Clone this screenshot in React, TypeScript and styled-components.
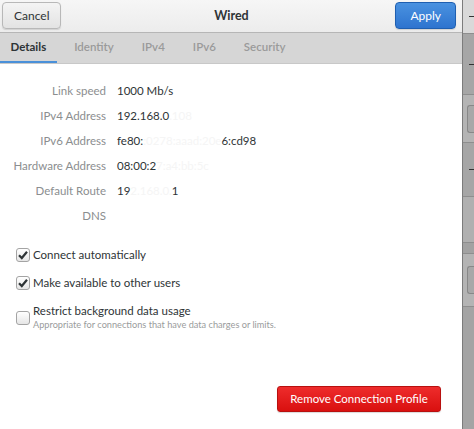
import styled, { createGlobalStyle } from "styled-components";

const GlobalStyle = createGlobalStyle`
  html, body {
    margin: 0;
    padding: 0;
    background: #ffffff;
  }
  body {
    font-family: Lato, "Noto Sans", "Liberation Sans", sans-serif;
    color: #2e3436;
  }
`;

const details = [
  { label: "Link speed", value: "1000 Mb/s", hidden: "", tail: "" },
  { label: "IPv4 Address", value: "192.168.0", hidden: ".108", tail: "" },
  { label: "IPv6 Address", value: "fe80:", hidden: ":0278:aaad:20e", tail: "6:cd98" },
  { label: "Hardware Address", value: "08:00:2", hidden: "7:a4:bb:5c", tail: "" },
  { label: "Default Route", value: "19", hidden: "2.168.0.", tail: "1" },
  { label: "DNS", value: "", hidden: "", tail: "" },
];

const tabs = ["Details", "Identity", "IPv4", "IPv6", "Security"];

function Check({ checked }: { checked: boolean }) {
  return (
    <Box>
      {checked && (
        <svg width="12" height="12" viewBox="0 0 12 12">
          <path d="M2 6.2 L4.8 9 L10 2.8" fill="none" stroke="#2e3436" strokeWidth="2.2" />
        </svg>
      )}
    </Box>
  );
}

function App() {
  return (
    <Page>
      <GlobalStyle />
      <Dialog>
        <Header>
          <Button>Cancel</Button>
          <Title>Wired</Title>
          <Button $primary>Apply</Button>
        </Header>
        <TabBar>
          {tabs.map((t, i) => (
            <Tab key={t} $active={i === 0}>
              {t}
            </Tab>
          ))}
        </TabBar>
        <Body>
          <InfoGrid>
            {details.map((d) => (
              <Row key={d.label}>
                <Label>{d.label}</Label>
                <Value>
                  {d.value}
                  {d.hidden && <Erased>{d.hidden}</Erased>}
                  {d.tail}
                </Value>
              </Row>
            ))}
          </InfoGrid>
          <Options>
            <Option>
              <Check checked />
              <OptionText>Connect automatically</OptionText>
            </Option>
            <Option>
              <Check checked />
              <OptionText>Make available to other users</OptionText>
            </Option>
            <Option $top>
              <Check checked={false} />
              <OptionText>
                Restrict background data usage
                <Hint>Appropriate for connections that have data charges or limits.</Hint>
              </OptionText>
            </Option>
          </Options>
          <Footer>
            <Danger>Remove Connection Profile</Danger>
          </Footer>
        </Body>
      </Dialog>
      <Behind>
        <Segment $h={33} $tone="#d9d9d9">
          <Dash />
        </Segment>
        <Segment $h={60} $tone="#a6a6a6">
          <Dash />
        </Segment>
        <Segment $h={47} $tone="#b4b4b4">
          <Knob />
        </Segment>
        <Segment $h={53} $tone="#a6a6a6">
          <Dash />
        </Segment>
        <Segment $h={45} $tone="#b0b0b0" />
        <Segment $h={10} $tone="#a2a2a2" />
        <Segment $h={52} $tone="#b4b4b4">
          <Knob />
        </Segment>
        <Segment $h={129} $tone="#a4a4a4" />
      </Behind>
    </Page>
  );
}

const Page = styled.div`
  display: flex;
  width: 474px;
  height: 429px;
  overflow: hidden;
`;

const Dialog = styled.div`
  width: 463px;
  display: flex;
  flex-direction: column;
  background: #ffffff;
`;

const Header = styled.div`
  height: 33px;
  display: grid;
  grid-template-columns: auto 1fr auto;
  align-items: start;
  padding: 2px 6px 0 2px;
  box-sizing: border-box;
  background: linear-gradient(#f6f6f6, #ececec);
  border-bottom: 1px solid #b6b6b6;
`;

const Title = styled.div`
  font-weight: 700;
  font-size: 12.5px;
  text-align: center;
  line-height: 27px;
  padding-left: 6px;
`;

const Button = styled.div<{ $primary?: boolean }>`
  height: 27px;
  box-sizing: border-box;
  padding: 0 ${(p) => (p.$primary ? "14px" : "11px")};
  border-radius: 4px;
  font-size: 12px;
  line-height: 25px;
  border: 1px solid ${(p) => (p.$primary ? "#1f5fb0" : "#b8b8b8")};
  color: ${(p) => (p.$primary ? "#ffffff" : "#2e3436")};
  background: ${(p) =>
    p.$primary ? "linear-gradient(#4a92e0, #2e74cf)" : "linear-gradient(#f4f4f4, #e3e3e3)"};
  box-shadow: 0 1px 1px rgba(0, 0, 0, 0.12);
`;

const TabBar = styled.div`
  height: 30px;
  display: flex;
  gap: 7px;
  background: #d6d6d6;
  border-bottom: 1px solid #c8c8c8;
`;

const Tab = styled.div<{ $active: boolean }>`
  padding: 0 10.5px;
  font-size: 11.5px;
  line-height: 28px;
  font-weight: ${(p) => (p.$active ? 700 : 600)};
  color: ${(p) => (p.$active ? "#2e3436" : "#9a9a9a")};
  border-bottom: 2px solid ${(p) => (p.$active ? "#4a90d9" : "transparent")};
`;

const Body = styled.div`
  flex: 1;
  display: flex;
  flex-direction: column;
  padding-top: 14px;
`;

const InfoGrid = styled.div`
  display: flex;
  flex-direction: column;
`;

const Row = styled.div`
  display: grid;
  grid-template-columns: 106px 1fr;
  column-gap: 11px;
  height: 25px;
  align-items: center;
  font-size: 11.5px;
`;

const Label = styled.span`
  text-align: right;
  color: #8b8e8f;
  white-space: nowrap;
`;

const Value = styled.span`
  color: #2e3436;
  white-space: nowrap;
`;

const Erased = styled.span`
  color: #f5f5f5;
`;

const Options = styled.div`
  display: flex;
  flex-direction: column;
  gap: 12px;
  padding: 19px 0 0 16px;
`;

const Option = styled.div<{ $top?: boolean }>`
  display: flex;
  align-items: ${(p) => (p.$top ? "flex-start" : "center")};
  gap: 3px;
  font-size: 11.5px;
  & > div:first-child {
    margin-top: ${(p) => (p.$top ? "8px" : "0")};
  }
`;

const Box = styled.div`
  width: 14px;
  height: 14px;
  box-sizing: border-box;
  border: 1px solid #a4a4a4;
  border-radius: 3px;
  background: linear-gradient(#ffffff, #e6e6e6);
  display: flex;
  align-items: center;
  justify-content: center;
  flex-shrink: 0;
`;

const OptionText = styled.div`
  display: flex;
  flex-direction: column;
  line-height: 16px;
`;

const Hint = styled.span`
  font-size: 9.2px;
  line-height: 12px;
  color: #9a9c9c;
`;

const Footer = styled.div`
  margin-top: auto;
  display: flex;
  justify-content: flex-end;
  padding: 0 21px 17px 0;
`;

const Danger = styled.div`
  width: 164px;
  height: 26px;
  box-sizing: border-box;
  border-radius: 3px;
  border: 1px solid #b8100f;
  background: linear-gradient(#ee2c2c, #d9100f);
  color: #ffffff;
  font-size: 11.5px;
  line-height: 24px;
  text-align: center;
  box-shadow: 0 1px 1px rgba(0, 0, 0, 0.15);
`;

const Behind = styled.div`
  width: 11px;
  display: flex;
  flex-direction: column;
  border-left: 1px solid #7c7c7c;
`;

const Segment = styled.div<{ $h: number; $tone: string }>`
  height: ${(p) => p.$h}px;
  flex-shrink: 0;
  background: ${(p) => p.$tone};
  border-bottom: 1px solid #8e8e8e;
  display: flex;
  align-items: center;
  justify-content: flex-end;
`;

const Dash = styled.div`
  width: 5px;
  height: 1px;
  background: #333333;
`;

const Knob = styled.div`
  width: 6px;
  height: 26px;
  border: 1px solid #888888;
  border-right: none;
  border-radius: 3px 0 0 3px;
  background: #a8a8a8;
`;

export default App;
